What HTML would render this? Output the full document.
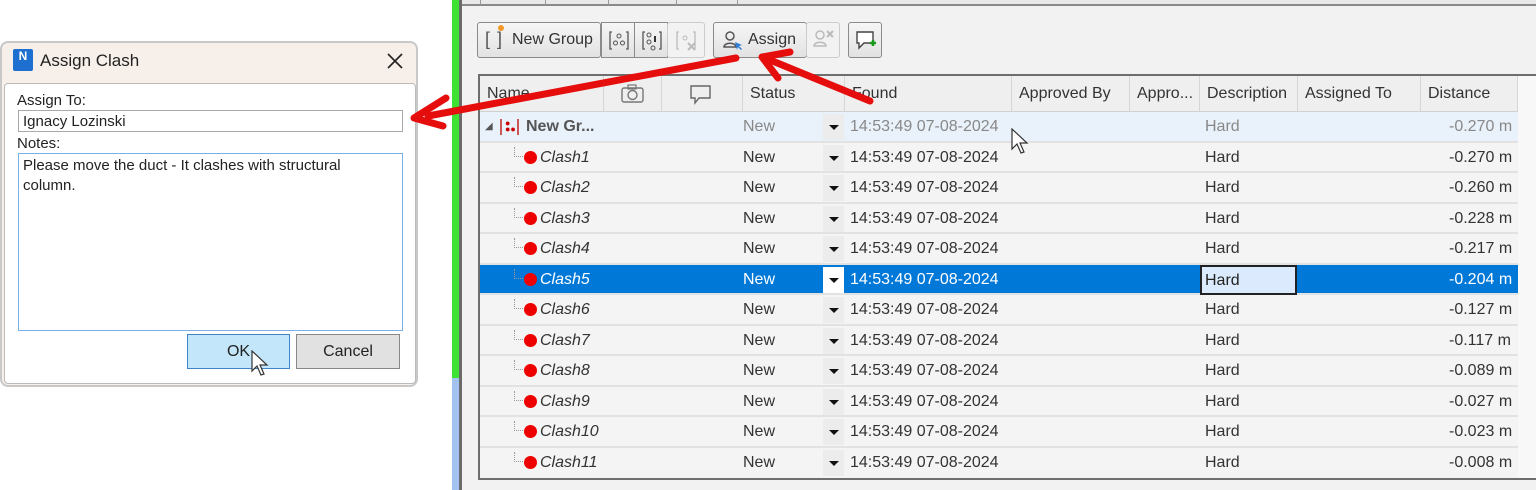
<!DOCTYPE html>
<html><head><meta charset="utf-8"><style>
*{box-sizing:border-box;margin:0;padding:0}
body{width:1536px;height:490px;position:relative;overflow:hidden;background:#fff;font-family:"Liberation Sans",sans-serif;font-size:16px;color:#333}
.a{position:absolute}
.panel{left:461px;top:0;width:1075px;height:490px;background:#f2f2f2}
.btn{position:absolute;top:22px;height:36px;border:1px solid #8a8a8a;border-radius:3px;background:linear-gradient(#f6f6f6,#e2e2e2)}
.tbl{left:478px;top:74px;width:1058px;height:406px;border:2px solid #6e6e6e;border-right:none;background:#f4f4f4}
.hd{position:absolute;top:0;height:36px;background:#efefef;border-right:1px solid #d6d6d6;border-bottom:1px solid #d0d0d0;line-height:36px;padding-left:7px;color:#333}
.row{position:absolute;left:0;width:1038px;height:30.5px;border-bottom:2px solid #e2e2e2;line-height:30px}
.row span{position:absolute;top:0}
.dd{position:absolute;left:343px;top:2px;width:21px;height:26px;background:#ececec}
.dd:after{content:"";position:absolute;left:6px;top:11px;border-left:5px solid transparent;border-right:5px solid transparent;border-top:5px solid #111}
.dot{position:absolute;left:44px;top:8px;width:13px;height:13px;border-radius:50%;background:#e00}
.tr{position:absolute;left:34px;top:4px;width:9px;height:10px;border-left:1px dotted #999;border-bottom:1px dotted #999}
.sel{background:#0078d7;color:#fff}
.nm{left:60px;font-style:italic}
.st{left:263px}.fd{left:370px}.ds{left:725px}.di{left:969px}
</style></head><body>
<div class="a panel"></div>
<div class="a" style="left:452px;top:0;width:7px;height:378px;background:#3de232"></div>
<div class="a" style="left:452px;top:378px;width:7px;height:112px;background:#a4c2f0"></div>
<div class="a" style="left:459px;top:0;width:3px;height:490px;background:#6a6a6a"></div>
<div class="a" style="left:462px;top:0;width:1074px;height:6px;border-bottom:2px solid #8a8a8a;background:#e9e9e9"></div>
<div class="a" style="left:480px;top:0;width:1px;height:5px;background:#999"></div>
<div class="a" style="left:545px;top:0;width:1px;height:5px;background:#999"></div>
<div class="a" style="left:608px;top:0;width:1px;height:5px;background:#999"></div>
<div class="a" style="left:676px;top:0;width:1px;height:5px;background:#999"></div>
<div class="a" style="left:737px;top:0;width:1px;height:5px;background:#999"></div>

<!-- toolbar -->
<div class="btn" style="left:477px;width:124px;"><span class="a" style="left:7px;top:6px;font-size:18px;color:#555">[</span><span class="a" style="left:19px;top:6px;font-size:18px;color:#555">]</span><span class="a" style="left:20px;top:2px;width:6px;height:6px;border-radius:50%;background:#f39a2a"></span><span class="a" style="left:34px;top:8px">New Group</span></div>
<div class="btn" style="left:601px;width:34px;border-radius:0"><svg class="a" style="left:6px;top:7px" width="22" height="22"><path d="M4 2H2v17h2M18 2h2v17h-2" stroke="#555" fill="none" stroke-width="1.3"/><circle cx="11" cy="6" r="2" fill="none" stroke="#555"/><circle cx="7.5" cy="13" r="2" fill="none" stroke="#555"/><circle cx="14.5" cy="13" r="2" fill="none" stroke="#555"/></svg></div>
<div class="btn" style="left:634px;width:34px;border-radius:0"><svg class="a" style="left:6px;top:7px" width="22" height="22"><path d="M4 2H2v17h2M18 2h2v17h-2" stroke="#555" fill="none" stroke-width="1.3"/><circle cx="8" cy="5" r="2" fill="none" stroke="#555"/><circle cx="8" cy="12" r="2" fill="none" stroke="#555"/><circle cx="12" cy="18" r="2" fill="none" stroke="#555"/><path d="M14 6v6" stroke="#333" stroke-width="2"/></svg></div>
<div class="btn" style="left:667px;width:38px;background:#f2f2f2;border-color:#ccc"><svg class="a" style="left:7px;top:7px" width="24" height="22"><path d="M4 2H2v17h2M18 2h2v17h-2" stroke="#bbb" fill="none" stroke-width="1.3"/><circle cx="10" cy="8" r="2" fill="none" stroke="#bbb"/><path d="M13 13l7 7M20 13l-7 7" stroke="#bbb" stroke-width="2"/></svg></div>
<div class="btn" style="left:713px;width:94px"><svg class="a" style="left:8px;top:7px" width="22" height="22"><circle cx="8" cy="6" r="4" fill="none" stroke="#555" stroke-width="1.5"/><path d="M2 17c0-5 12-5 12 0z" fill="none" stroke="#555" stroke-width="1.5"/><path d="M13 12l7 3-3 1 3 3-1 1-3-3-1 3z" fill="#2f7fd6"/></svg><span class="a" style="left:34px;top:8px">Assign</span></div>
<div class="btn" style="left:806px;width:34px;background:#f2f2f2;border-color:#ccc"><svg class="a" style="left:5px;top:6px" width="24" height="22"><circle cx="8" cy="6" r="4" fill="none" stroke="#bbb" stroke-width="1.5"/><path d="M2 17c0-5 12-5 12 0z" fill="none" stroke="#bbb" stroke-width="1.5"/><path d="M15 2l6 6M21 2l-6 6" stroke="#bbb" stroke-width="2"/></svg></div>
<div class="btn" style="left:848px;width:34px"><svg class="a" style="left:5px;top:6px" width="24" height="24"><path d="M3 3h16v11h-9l-5 5v-5h-2z" fill="#fff" stroke="#444" stroke-width="1.4"/><path d="M16 14h6M19 11v6" stroke="#1a9a1a" stroke-width="2.5"/></svg></div>

<!-- table -->
<div class="a tbl">
<div class="hd" style="left:0;width:124px">Name</div>
<div class="hd" style="left:124px;width:58px"><svg class="a" style="left:17px;top:8px" width="24" height="20"><rect x="1" y="4" width="21" height="14" rx="2" fill="none" stroke="#777" stroke-width="1.4"/><rect x="7" y="1" width="8" height="4" fill="none" stroke="#777" stroke-width="1.2"/><circle cx="11.5" cy="11" r="4.5" fill="none" stroke="#777" stroke-width="1.4"/></svg></div>
<div class="hd" style="left:182px;width:81px"><svg class="a" style="left:27px;top:8px" width="24" height="22"><path d="M2 2h19v12h-11l-4 5v-5h-4z" fill="none" stroke="#666" stroke-width="1.4"/></svg></div>
<div class="hd" style="left:263px;width:102px">Status</div>
<div class="hd" style="left:365px;width:167px">Found</div>
<div class="hd" style="left:532px;width:118px">Approved By</div>
<div class="hd" style="left:650px;width:70px">Appro...</div>
<div class="hd" style="left:720px;width:98px">Description</div>
<div class="hd" style="left:818px;width:123px">Assigned To</div>
<div class="hd" style="left:941px;width:97px">Distance</div>
<div class="a" style="left:1038px;top:0;width:20px;height:402px;background:#f8f8f8"></div>

<div class="row" style="top:36px;background:#e9f1fb;color:#888">
<span style="left:5px;font-size:10px;color:#555">◢</span>
<span style="left:20px;top:7px;width:19px;height:16px;border:2px solid #c55;border-top:none;border-bottom:none"></span><span style="left:25px;top:8px;width:9px;height:9px;color:#c00;font-size:9px;line-height:6px">●<br>●●</span>
<span style="left:46px;font-weight:bold;color:#555">New Gr...</span>
<span class="st">New</span><div class="dd"></div><span class="fd">14:53:49 07-08-2024</span>
<span class="ds">Hard</span><span class="di">-0.270 m</span></div>

<div class="row" style="top:66.5px"><div class="tr"></div><div class="dot"></div><span class="nm">Clash1</span><span class="st">New</span><div class="dd"></div><span class="fd">14:53:49 07-08-2024</span><span class="ds">Hard</span><span class="di">-0.270 m</span></div>
<div class="row" style="top:97px"><div class="tr"></div><div class="dot"></div><span class="nm">Clash2</span><span class="st">New</span><div class="dd"></div><span class="fd">14:53:49 07-08-2024</span><span class="ds">Hard</span><span class="di">-0.260 m</span></div>
<div class="row" style="top:127.5px"><div class="tr"></div><div class="dot"></div><span class="nm">Clash3</span><span class="st">New</span><div class="dd"></div><span class="fd">14:53:49 07-08-2024</span><span class="ds">Hard</span><span class="di">-0.228 m</span></div>
<div class="row" style="top:158px"><div class="tr"></div><div class="dot"></div><span class="nm">Clash4</span><span class="st">New</span><div class="dd"></div><span class="fd">14:53:49 07-08-2024</span><span class="ds">Hard</span><span class="di">-0.217 m</span></div>
<div class="row sel" style="top:188.5px"><div class="tr"></div><div class="dot"></div><span class="nm">Clash5</span><span class="st">New</span><div class="dd" style="background:#fff"></div><span class="fd">14:53:49 07-08-2024</span><span style="left:720px;width:97px;height:30px;border:2px solid #222;background:#dbeafc;color:#222;padding-left:3px;line-height:27px">Hard</span><span class="di">-0.204 m</span></div>
<div class="row" style="top:219px"><div class="tr"></div><div class="dot"></div><span class="nm">Clash6</span><span class="st">New</span><div class="dd"></div><span class="fd">14:53:49 07-08-2024</span><span class="ds">Hard</span><span class="di">-0.127 m</span></div>
<div class="row" style="top:249.5px"><div class="tr"></div><div class="dot"></div><span class="nm">Clash7</span><span class="st">New</span><div class="dd"></div><span class="fd">14:53:49 07-08-2024</span><span class="ds">Hard</span><span class="di">-0.117 m</span></div>
<div class="row" style="top:280px"><div class="tr"></div><div class="dot"></div><span class="nm">Clash8</span><span class="st">New</span><div class="dd"></div><span class="fd">14:53:49 07-08-2024</span><span class="ds">Hard</span><span class="di">-0.089 m</span></div>
<div class="row" style="top:310.5px"><div class="tr"></div><div class="dot"></div><span class="nm">Clash9</span><span class="st">New</span><div class="dd"></div><span class="fd">14:53:49 07-08-2024</span><span class="ds">Hard</span><span class="di">-0.027 m</span></div>
<div class="row" style="top:341px"><div class="tr"></div><div class="dot"></div><span class="nm">Clash10</span><span class="st">New</span><div class="dd"></div><span class="fd">14:53:49 07-08-2024</span><span class="ds">Hard</span><span class="di">-0.023 m</span></div>
<div class="row" style="top:371.5px;border-bottom:none"><div class="tr"></div><div class="dot"></div><span class="nm">Clash11</span><span class="st">New</span><div class="dd"></div><span class="fd">14:53:49 07-08-2024</span><span class="ds">Hard</span><span class="di">-0.008 m</span></div>
</div>

<!-- dialog -->
<div class="a" style="left:0;top:41px;width:418px;height:346px;border:2px solid #c8c8c8;border-radius:8px;background:#f7f0ea"></div>
<div class="a" style="left:13px;top:49px;width:20px;height:22px;background:#1d6fd0;border-radius:2px;color:#fff;font-size:12px;font-weight:bold;text-align:center;line-height:15px">N</div>
<div class="a" style="left:40px;top:51px;font-size:17px;color:#222">Assign Clash</div>
<svg class="a" style="left:387px;top:53px" width="16" height="16"><path d="M1 1l14 14M15 1L1 15" stroke="#222" stroke-width="1.6"/></svg>
<div class="a" style="left:4px;top:83px;width:412px;height:301px;background:#fff;border:1px solid #bbb;border-radius:4px"></div>
<div class="a" style="left:17px;top:92px;font-size:15px;color:#222">Assign To:</div>
<div class="a" style="left:18px;top:110px;width:385px;height:22px;border:1px solid #aaa;font-size:15px;padding:2px 4px;color:#222">Ignacy Lozinski</div>
<div class="a" style="left:17px;top:135px;font-size:15px;color:#222">Notes:</div>
<div class="a" style="left:18px;top:153px;width:385px;height:178px;border:1px solid #7ab0e6;font-size:15px;padding:2px 60px 2px 4px;line-height:20px;color:#222">Please move the duct - It clashes with structural column.</div>
<div class="a" style="left:187px;top:334px;width:103px;height:35px;background:#c4e6fa;border:1px solid #3f84c9;text-align:center;line-height:33px;color:#222">OK</div>
<div class="a" style="left:296px;top:334px;width:104px;height:35px;background:#e1e1e1;border:1px solid #888;text-align:center;line-height:33px;color:#222">Cancel</div>
<svg class="a" style="left:250px;top:350px" width="20" height="28"><path d="M2 1v20l5-5 4 9 3-1-4-9h7z" fill="#fff" stroke="#333" stroke-width="1.2"/></svg>
<svg class="a" style="left:1010px;top:128px" width="20" height="28"><path d="M2 1v20l5-5 4 9 3-1-4-9h7z" fill="#fff" stroke="#333" stroke-width="1.2"/></svg>

<!-- arrows -->
<svg class="a" style="left:0;top:0" width="1536" height="490">
<path d="M736 58 L428 116" stroke="#e60d0d" stroke-width="7" stroke-linecap="round" fill="none"/>
<path d="M446 98 L414 118 L443 126" stroke="#e60d0d" stroke-width="7" stroke-linecap="round" stroke-linejoin="round" fill="none"/>
<path d="M870 101 L770 60" stroke="#e60d0d" stroke-width="7" stroke-linecap="round" fill="none"/>
<path d="M790 52 L762 57 L778 78" stroke="#e60d0d" stroke-width="7" stroke-linecap="round" stroke-linejoin="round" fill="none"/>
</svg>
</body></html>
